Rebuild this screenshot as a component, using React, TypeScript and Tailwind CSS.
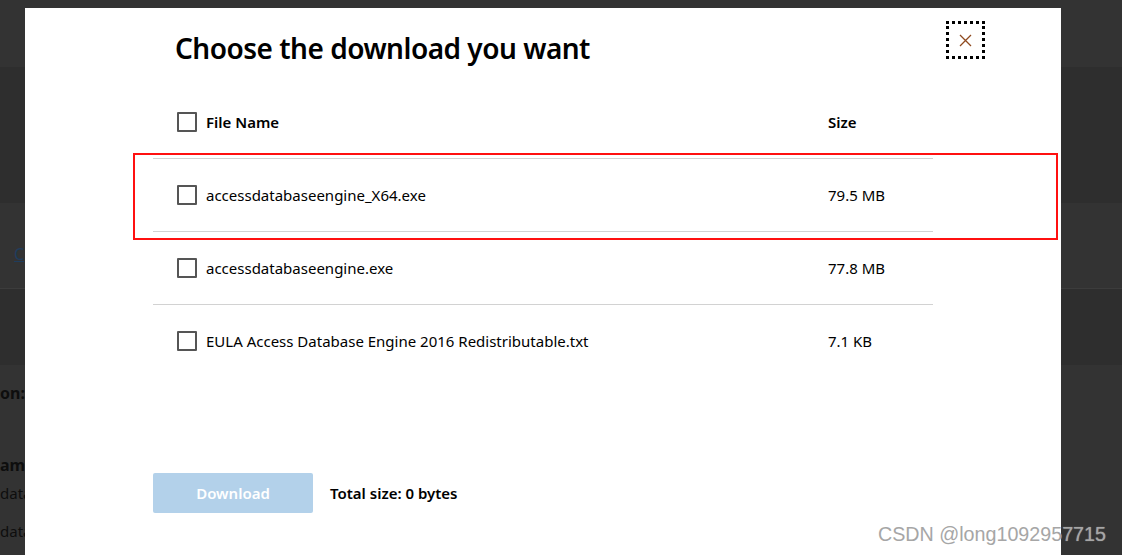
import React from "react";

const rows = [
  { name: "accessdatabaseengine_X64.exe", size: "79.5 MB" },
  { name: "accessdatabaseengine.exe", size: "77.8 MB" },
  { name: "EULA Access Database Engine 2016 Redistributable.txt", size: "7.1 KB" },
];

function Box() {
  return <span className="block w-[20px] h-[20px] border-2 border-[#555] rounded-[1px] bg-white shrink-0" />;
}

export default function App() {
  const font = { fontFamily: '"Noto Sans", "Open Sans", sans-serif' };
  return (
    <div className="relative w-[1122px] h-[555px] overflow-hidden bg-[#333333]" style={font}>
      {/* dimmed page behind */}
      <div className="flex flex-col w-full h-full">
        <div className="h-[67px] bg-[#333333]" />
        <div className="h-[136px] bg-[#2e2e2e]" />
        <div className="h-[85px] bg-[#333333] pl-[14px] pt-[41px]">
          <span className="block text-[16px] leading-[20px] text-[#1f3d5e] underline">C</span>
        </div>
        <div className="h-[77px] bg-[#2e2e2e] border-t border-[#3c3c3c]" />
        <div className="flex-1 bg-[#333333] flex flex-col text-[#0e0e0e]">
          <div className="mt-[17px] h-[22px] leading-[22px] text-[16px] font-bold">on:</div>
          <div className="mt-[50px] h-[22px] leading-[22px] text-[16px] font-bold">am</div>
          <div className="mt-[6px] h-[22px] leading-[22px] text-[15px]">data</div>
          <div className="mt-[16px] h-[22px] leading-[22px] text-[15px]">data</div>
        </div>
      </div>

      {/* modal */}
      <div className="absolute left-[25px] top-[8px] w-[1036px] h-[560px] bg-white">
        <div className="absolute left-[921px] top-[13px] w-[39px] h-[38px] border-[3px] border-dotted border-black flex items-center justify-center">
          <svg width="13" height="13" viewBox="0 0 13 13">
            <path d="M1 1 L12 12 M12 1 L1 12" stroke="#8f4a1f" strokeWidth="1.3" fill="none" />
          </svg>
        </div>
        <div className="ml-[128px] w-[780px] flex flex-col">
          <div className="h-[78px] flex items-center pl-[22px]">
            <h1 className="text-[28px] font-semibold text-black tracking-[-0.5px] mt-[2px]">Choose the download you want</h1>
          </div>
          <div className="h-[72px] flex items-center pl-[24px] text-[15px] font-semibold text-black">
            <Box />
            <span className="ml-[9px] w-[622px]">File Name</span>
            <span>Size</span>
          </div>
          {rows.map((r) => (
            <div
              key={r.name}
              className="h-[73px] flex items-center pl-[24px] text-[15px] text-black border-t border-[#d2d2d2]"
            >
              <Box />
              <span className="ml-[9px] w-[622px]">{r.name}</span>
              <span>{r.size}</span>
            </div>
          ))}
          <div className="mt-[96px] flex items-center">
            <button className="w-[160px] h-[40px] bg-[#b3d1ea] text-white text-[15px] font-semibold rounded-[2px]">
              Download
            </button>
            <span className="ml-[17px] text-[15px] font-semibold text-black">Total size: 0 bytes</span>
          </div>
        </div>
      </div>

      {/* red highlight */}
      <div className="absolute left-[133px] top-[153px] w-[925px] h-[87px] border-2 border-[#ff1010]" />

      {/* watermark */}
      <div
        className="absolute left-[878px] top-[521px] text-[19.7px] leading-[26px] text-[#a6a6a6]"
        style={{ fontFamily: '"Liberation Sans", Arial, sans-serif', textShadow: "0 0 1px rgba(255,255,255,0.5)" }}
      >
        CSDN @long1092957715
      </div>
    </div>
  );
}
